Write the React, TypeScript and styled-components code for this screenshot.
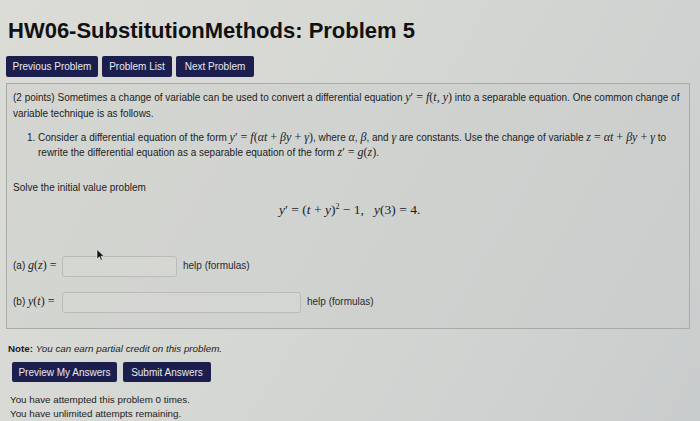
import styled, { createGlobalStyle } from "styled-components";

const Global = createGlobalStyle`
  html, body {
    margin: 0;
    padding: 0;
    background: #d5d6d2;
  }
  body {
    font-family: "Liberation Sans", Arial, sans-serif;
    color: #1c1c1e;
  }
`;

const Page = styled.div`
  position: relative;
  width: 700px;
  height: 421px;
  overflow: hidden;
  padding: 0 6px;
  box-sizing: border-box;
  background: linear-gradient(120deg, #dcdcd6 0%, #d6d8d4 40%, #cfd2d0 75%, #c9cccc 100%);
`;

const Title = styled.h1`
  margin: 0;
  padding: 19px 0 0 2px;
  font-size: 22px;
  font-weight: bold;
  line-height: 24px;
  color: #111;
`;

const NavRow = styled.div`
  display: flex;
  gap: 4px;
  margin-top: 13px;
`;

const NavButton = styled.button<{ $w: number }>`
  width: ${(p) => p.$w}px;
  height: 21px;
  padding: 0;
  border: none;
  border-radius: 2px;
  background: #1c1f4d;
  color: #e8e9f0;
  font-family: "Liberation Sans", Arial, sans-serif;
  font-size: 10px;
`;

const ProblemBox = styled.div`
  margin-top: 6px;
  width: 684px;
  height: 246px;
  box-sizing: border-box;
  border: 1px solid #a9aba6;
  background: rgba(200, 203, 200, 0.35);
  padding: 6px 6px 0 6px;
  font-size: 10px;
  line-height: 16px;
`;

const Para = styled.p`
  margin: 0;
`;

const List = styled.ol`
  margin: 8px 0 0 0;
  padding-left: 25px;
  line-height: 15px;
`;

const Math = styled.span`
  font-family: "Liberation Serif", "Times New Roman", serif;
  font-style: italic;
  font-size: 12px;
  line-height: 1;
`;

const Plain = styled.span`
  font-style: normal;
`;

const Solve = styled.p`
  margin: 20px 0 0 0;
`;

const Equation = styled.div`
  margin: 5px 0 0 0;
  padding-left: 266px;
  font-family: "Liberation Serif", "Times New Roman", serif;
  font-size: 13.5px;
  line-height: 18px;
`;

const Sup = styled.sup`
  font-size: 8px;
  line-height: 0;
`;

const AnswerRow = styled.div<{ $top: number }>`
  display: flex;
  align-items: center;
  margin-top: ${(p) => p.$top}px;
  height: 22px;
`;

const Label = styled.span`
  width: 49px;
  white-space: nowrap;
`;

const Input = styled.div<{ $w: number }>`
  width: ${(p) => p.$w}px;
  height: 21px;
  box-sizing: border-box;
  border: 1px solid #b9bbb6;
  border-radius: 3px;
  background: rgba(215, 217, 212, 0.6);
`;

const Help = styled.span`
  margin-left: 6px;
  color: #2a2a30;
`;

const Note = styled.p`
  margin: 14px 0 0 2px;
  font-size: 9.8px;
  line-height: 12px;
  b {
    font-weight: bold;
  }
  i {
    font-style: italic;
  }
`;

const ActionRow = styled.div`
  display: flex;
  gap: 6px;
  margin: 7px 0 0 6px;
`;

const ActionButton = styled.button<{ $w: number }>`
  width: ${(p) => p.$w}px;
  height: 20px;
  padding: 0;
  border: none;
  border-radius: 2px;
  background: #1c1f4d;
  color: #e8e9f0;
  font-family: "Liberation Sans", Arial, sans-serif;
  font-size: 10px;
`;

const Status = styled.div`
  margin: 11px 0 0 4px;
  font-size: 9.8px;
  line-height: 14px;
  color: #222;
`;

const Cursor = styled.svg`
  position: absolute;
  left: 96px;
  top: 249px;
`;

export default function App() {
  return (
    <Page>
      <Global />
      <Title>HW06-SubstitutionMethods: Problem 5</Title>
      <NavRow>
        <NavButton $w={92}>Previous Problem</NavButton>
        <NavButton $w={70}>Problem List</NavButton>
        <NavButton $w={78}>Next Problem</NavButton>
      </NavRow>
      <ProblemBox>
        <Para>
          (2 points) Sometimes a change of variable can be used to convert a differential equation{" "}
          <Math>
            y<Plain>′ = </Plain>f<Plain>(</Plain>t<Plain>, </Plain>y<Plain>)</Plain>
          </Math>{" "}
          into a separable equation. One common change of variable technique is as follows.
        </Para>
        <List>
          <li>
            Consider a differential equation of the form{" "}
            <Math>
              y<Plain>′ = </Plain>f<Plain>(</Plain>αt<Plain> + </Plain>βy<Plain> + </Plain>γ<Plain>)</Plain>
            </Math>
            , where <Math>α</Math>, <Math>β</Math>, and <Math>γ</Math> are constants. Use the change of
            variable{" "}
            <Math>
              z<Plain> = </Plain>αt<Plain> + </Plain>βy<Plain> + </Plain>γ
            </Math>{" "}
            to rewrite the differential equation as a separable equation of the form{" "}
            <Math>
              z<Plain>′ = </Plain>g<Plain>(</Plain>z<Plain>)</Plain>
            </Math>
            .
          </li>
        </List>
        <Solve>Solve the initial value problem</Solve>
        <Equation>
          <i>y</i>′ = (<i>t</i> + <i>y</i>)<Sup>2</Sup> − 1,&nbsp;&nbsp; <i>y</i>(3) = 4.
        </Equation>
        <AnswerRow $top={36}>
          <Label>
            (a) <Math>g<Plain>(</Plain>z<Plain>) =</Plain></Math>
          </Label>
          <Input $w={115} />
          <Help>help (formulas)</Help>
        </AnswerRow>
        <AnswerRow $top={14}>
          <Label>
            (b) <Math>y<Plain>(</Plain>t<Plain>) =</Plain></Math>
          </Label>
          <Input $w={239} />
          <Help>help (formulas)</Help>
        </AnswerRow>
      </ProblemBox>
      <Note>
        <b>Note:</b> <i>You can earn partial credit on this problem.</i>
      </Note>
      <ActionRow>
        <ActionButton $w={105}>Preview My Answers</ActionButton>
        <ActionButton $w={88}>Submit Answers</ActionButton>
      </ActionRow>
      <Status>
        You have attempted this problem 0 times.
        <br />
        You have unlimited attempts remaining.
      </Status>
      <Cursor width="9" height="12" viewBox="0 0 9 12">
        <path d="M1 0.5 L1 10 L3.4 7.8 L5 11.3 L6.4 10.7 L4.9 7.3 L8 7.3 Z" fill="#111" stroke="#eee" strokeWidth="0.6" />
      </Cursor>
    </Page>
  );
}
